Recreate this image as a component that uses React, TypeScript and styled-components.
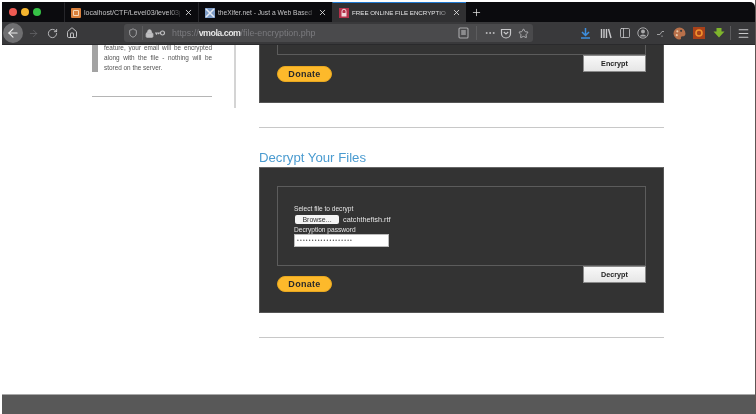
import React from "react";
import styled, { createGlobalStyle } from "styled-components";
import {
  ArrowLeft,
  ArrowRight,
  RotateCw,
  Home,
  Shield,
  Lock,
  MoreHorizontal,
  Star,
  X,
  Plus,
  Menu,
  PanelLeft,
} from "lucide-react";

const GlobalStyle = createGlobalStyle`
  html, body { margin: 0; padding: 0; background: #fff; }
  body { font-family: "Liberation Sans", Arial, sans-serif; overflow: hidden; }
`;

const Screen = styled.div`
  width: 756px;
  height: 414px;
  box-sizing: border-box;
  padding: 2px 0 0 2px;
  border-right: 1px solid #5e5654;
  display: flex;
  flex-direction: column;
  overflow: hidden;
  background: #fff;
  filter: blur(0.45px);
`;

const TabBar = styled.div`
  height: 20px;
  flex: none;
  display: flex;
  align-items: stretch;
  background: #0b0b0e;
  border-top-right-radius: 5px;
`;

const Lights = styled.div`
  width: 62px;
  flex: none;
  display: flex;
  align-items: center;
  gap: 4px;
  padding-left: 7px;
  box-sizing: border-box;
`;

const Light = styled.span<{ $c: string }>`
  width: 8px;
  height: 8px;
  border-radius: 50%;
  background: ${(p) => p.$c};
`;

const Tab = styled.div<{ $active?: boolean }>`
  width: 134px;
  flex: none;
  box-sizing: border-box;
  display: flex;
  align-items: center;
  padding: 0 5px 0 6px;
  gap: 3px;
  background: ${(p) => (p.$active ? "#303032" : "transparent")};
  border-left: 1px solid ${(p) => (p.$active ? "transparent" : "#26262a")};
  border-top: 1px solid ${(p) => (p.$active ? "#1f78d0" : "transparent")};
  color: ${(p) => (p.$active ? "#e2e2e4" : "#c4c4c6")};
  svg.close { flex: none; color: #e8e8e8; margin-left: 1px; }
`;

const TabTitle = styled.span<{ $fs: number }>`
  flex: 1;
  min-width: 0;
  font-size: ${(p) => p.$fs}px;
  line-height: 10px;
  white-space: nowrap;
  mask-image: linear-gradient(to right, #000 88%, rgba(0, 0, 0, 0.25));
`;

const NewTab = styled.div`
  width: 20px;
  display: flex;
  align-items: center;
  justify-content: center;
  color: #e8e8e8;
`;

const Toolbar = styled.div`
  height: 23px;
  flex: none;
  display: flex;
  align-items: center;
  background: #39393b;
  border-bottom: 1px solid #2a2a2c;
  box-sizing: border-box;
  color: #c8c8ca;
`;

const BackButton = styled.div`
  width: 20px;
  height: 20px;
  margin-left: 1px;
  border-radius: 50%;
  background: #6f6f71;
  color: #ececec;
  flex: none;
  display: flex;
  align-items: center;
  justify-content: center;
`;

const NavIcons = styled.div`
  width: 101px;
  flex: none;
  display: flex;
  align-items: center;
  padding-left: 5px;
  box-sizing: border-box;
  gap: 8px;
`;

const UrlBar = styled.div`
  width: 409px;
  height: 18px;
  flex: none;
  border-radius: 3px;
  background: #4a4a4c;
  display: flex;
  align-items: center;
  padding-left: 4px;
  box-sizing: border-box;
  color: #c0c0c2;
`;

const Divider = styled.span<{ $m?: string }>`
  width: 1px;
  height: 14px;
  flex: none;
  background: #5c5c5e;
  margin: ${(p) => p.$m || "0 4px"};
`;

const UrlText = styled.span`
  margin-left: 6px;
  font-size: 8.9px;
  white-space: nowrap;
  color: #7a7a7e;
`;

const Host = styled.b`
  color: #e6e6e6;
  font-weight: 700;
  letter-spacing: -0.5px;
`;

const UrlEnd = styled.div`
  margin-left: auto;
  display: flex;
  align-items: center;
  gap: 6px;
  padding-right: 4px;
`;

const Dots = styled(MoreHorizontal)`
  margin: 0 -2px 0 1px;
`;

const Tools = styled.div`
  flex: 1;
  display: grid;
  grid-template-columns: 21px 19px 19px 18px 18px 19px 20px 19px 4px 22px;
  justify-items: center;
  align-items: center;
  padding-left: 42px;
`;

const Page = styled.div`
  flex: 1;
  min-height: 0;
  display: flex;
  align-items: flex-start;
  padding-left: 90px;
  background: #fff;
`;

const Sidebar = styled.aside`
  width: 120px;
  flex: none;
`;

const Note = styled.div`
  height: 27px;
  border-left: 6px solid #a3a3a3;
  box-sizing: border-box;
  padding-left: 6px;
  overflow: hidden;
`;

const NoteText = styled.p`
  margin: -2px 0 0;
  font-size: 6.4px;
  line-height: 10.2px;
  color: #555;
  text-align: justify;
`;

const SideRule = styled.hr`
  margin: 24px 0 0;
  border: 0;
  height: 1px;
  background: #b5b5b5;
`;

const Rail = styled.div`
  width: 2px;
  height: 63px;
  margin-left: 22px;
  flex: none;
  background: #d4d4d4;
`;

const Main = styled.main`
  width: 405px;
  margin-left: 23px;
  flex: none;
`;

const Panel = styled.section<{ $clipped?: boolean }>`
  height: ${(p) => (p.$clipped ? "58px" : "146px")};
  box-sizing: border-box;
  padding: ${(p) => (p.$clipped ? "0" : "18px")} 17px 0;
  background: #333333;
  border: 1px solid #555;
  border-top: ${(p) => (p.$clipped ? "none" : "1px solid #666")};
`;

const Inset = styled.div<{ $clipped?: boolean }>`
  height: ${(p) => (p.$clipped ? "10px" : "80px")};
  box-sizing: border-box;
  border: 1px solid #5c5c5c;
  border-top: ${(p) => (p.$clipped ? "none" : "1px solid #5c5c5c")};
  padding: ${(p) => (p.$clipped ? "0" : "17px 0 0 16px")};
  color: #e4e4e4;
`;

const ActionRow = styled.div`
  display: flex;
  justify-content: space-between;
  align-items: flex-start;
`;

const Donate = styled.div<{ $top: number }>`
  width: 55px;
  height: 16px;
  margin-top: ${(p) => p.$top}px;
  border-radius: 8px;
  background: #fdb92b;
  border: 1px solid #e8a820;
  box-sizing: border-box;
  display: flex;
  align-items: center;
  justify-content: center;
  font-size: 9px;
  font-weight: 700;
  letter-spacing: 0.3px;
  color: #2a2a2a;
`;

const Submit = styled.div`
  width: 63px;
  height: 17px;
  box-sizing: border-box;
  background: linear-gradient(#f8f8f8, #e6e6e6);
  border: 1px solid #8a8a8a;
  display: flex;
  align-items: center;
  justify-content: center;
  font-size: 7.2px;
  font-weight: 700;
  color: #222;
`;

const Rule = styled.hr<{ $top: number }>`
  margin: ${(p) => p.$top}px 0 0;
  border: 0;
  height: 1px;
  background: #c8c8c8;
`;

const Heading = styled.h2`
  margin: 21px 0 0;
  font-size: 13.2px;
  line-height: 18px;
  font-weight: 400;
  color: #4a9bd0;
`;

const FieldLabel = styled.div`
  font-size: 6.6px;
  line-height: 9px;
`;

const FileRow = styled.div`
  display: flex;
  align-items: center;
  height: 11px;
  margin-top: 1px;
  gap: 4px;
  font-size: 7.3px;
`;

const Browse = styled.div`
  width: 44px;
  height: 9px;
  margin-left: 1px;
  border-radius: 2px;
  background: #f4f4f4;
  color: #333;
  font-size: 7px;
  line-height: 9px;
  text-align: center;
`;

const PasswordBox = styled.div`
  width: 95px;
  height: 13px;
  box-sizing: border-box;
  background: #fff;
  border: 1px solid #bbb;
  padding-left: 2px;
  color: #555;
  font-size: 5px;
  line-height: 11px;
  letter-spacing: 1.2px;
  white-space: nowrap;
  overflow: hidden;
`;

const Footer = styled.footer`
  height: 20px;
  flex: none;
  background: #585858;
  border-top: 1px solid #a9a9a9;
  box-sizing: border-box;
`;

const Favicon = ({ kind }: { kind: "xampp" | "xifer" | "lock" }) => (
  <svg width="10" height="10" viewBox="0 0 10 10" style={{ flex: "none" }}>
    {kind === "xampp" && (
      <>
        <rect width="10" height="10" rx="1" fill="#d9803c" />
        <path d="M2.5 2.5h5v5h-5z" fill="none" stroke="#f5d7b5" strokeWidth="1" />
      </>
    )}
    {kind === "xifer" && (
      <>
        <rect width="10" height="10" fill="#7d9cc7" />
        <path d="M1 1l8 8M9 1L1 9" stroke="#e4e9f2" strokeWidth="1.6" />
      </>
    )}
    {kind === "lock" && (
      <>
        <rect width="10" height="10" fill="#b5304a" />
        <path d="M3 5V3.2a2 2 0 0 1 4 0V5" fill="none" stroke="#f1d6da" />
        <rect x="2.5" y="5" width="5" height="3.5" fill="#f1d6da" />
      </>
    )}
  </svg>
);

const KeyIcon = () => (
  <svg width="12" height="8" viewBox="0 0 12 8" fill="none" stroke="#c0c0c2" strokeWidth="1.2">
    <circle cx="8.5" cy="4" r="2" />
    <path d="M6.5 4H1M2.5 4v1.8M4.5 4v1.3" />
  </svg>
);

const ReaderIcon = () => (
  <svg width="11" height="12" viewBox="0 0 11 12" fill="none" stroke="#a8a8aa" strokeWidth="1.1" style={{ marginRight: 1 }}>
    <rect x="1" y="1" width="9" height="10" rx="1" />
    <rect x="3.2" y="3" width="4.6" height="5" fill="#8c8c8e" stroke="none" />
  </svg>
);

const PocketIcon = () => (
  <svg width="12" height="11" viewBox="0 0 12 11" fill="none" stroke="#c8c8ca" strokeWidth="1.2">
    <path d="M1.5 1.5h9v4a4.5 4.5 0 0 1-9 0z" />
    <path d="M3.8 4l2.2 2 2.2-2" />
  </svg>
);

const DownloadIcon = () => (
  <svg width="11" height="12" viewBox="0 0 11 12" fill="none" stroke="#3d8fe0" strokeWidth="1.5">
    <path d="M5.5 1v7M2 5l3.5 3.5L9 5M1 11h9" />
  </svg>
);

const LibraryIcon = () => (
  <svg width="12" height="11" viewBox="0 0 12 11" fill="none" stroke="#c8c8ca" strokeWidth="1.4">
    <path d="M1.5 1v9M4 1v9M6.5 1v9M8.5 1l2.5 9" />
  </svg>
);

const AccountIcon = () => (
  <svg width="12" height="12" viewBox="0 0 12 12">
    <circle cx="6" cy="6" r="5.2" fill="none" stroke="#a9a9ab" />
    <circle cx="6" cy="4.6" r="2" fill="#a9a9ab" />
    <path d="M2.6 9.5a3.6 3 0 0 1 6.8 0z" fill="#a9a9ab" />
  </svg>
);

const TinyIcon = () => (
  <svg width="10" height="10" viewBox="0 0 10 10" fill="none" stroke="#a0a0a2" strokeWidth="1">
    <path d="M1 6.5h3l2-3h2M6 7.5V9" />
  </svg>
);

const PaletteIcon = () => (
  <svg width="13" height="13" viewBox="0 0 12 12">
    <path d="M6 .5a5.5 5.5 0 1 0 1 10.9c1-.6-.4-2 .8-2.6 1.3-.4 3.7.4 3.7-2.8A5.5 5.5 0 0 0 6 .5z" fill="#b8704a" />
    <circle cx="7.5" cy="3.5" r="1" fill="#3a3a3c" />
    <circle cx="4" cy="4" r="1" fill="#e8c9a8" />
    <circle cx="3.5" cy="7.5" r="1" fill="#e8c9a8" />
  </svg>
);

const OrangeIcon = () => (
  <svg width="12" height="12" viewBox="0 0 12 12">
    <rect width="12" height="12" fill="#a8411a" />
    <circle cx="6" cy="6" r="3" fill="none" stroke="#f0922e" strokeWidth="1.6" />
  </svg>
);

const GreenIcon = () => (
  <svg width="12" height="12" viewBox="0 0 12 12">
    <path d="M3.5 1h5v3.5H11.5L6 10.5.5 4.5h3z" fill="#7fb52c" />
  </svg>
);

export default function App() {
  return (
    <>
      <GlobalStyle />
      <Screen>
        <TabBar>
          <Lights>
            <Light $c="#ee5a52" />
            <Light $c="#f5b52e" />
            <Light $c="#36c246" />
          </Lights>
          <Tab>
            <Favicon kind="xampp" />
            <TabTitle $fs={7.1}>localhost/CTF/Level03/level03p</TabTitle>
            <X className="close" size={9} strokeWidth={2.2} />
          </Tab>
          <Tab>
            <Favicon kind="xifer" />
            <TabTitle $fs={6.7}>theXifer.net - Just a Web Based</TabTitle>
            <X className="close" size={9} strokeWidth={2.2} />
          </Tab>
          <Tab $active>
            <Favicon kind="lock" />
            <TabTitle $fs={6.2}>FREE ONLINE FILE ENCRYPTIO</TabTitle>
            <X className="close" size={9} strokeWidth={2.2} />
          </Tab>
          <NewTab>
            <Plus size={11} strokeWidth={1.6} />
          </NewTab>
        </TabBar>
        <Toolbar>
          <BackButton>
            <ArrowLeft size={14} strokeWidth={2} />
          </BackButton>
          <NavIcons>
            <ArrowRight size={11} strokeWidth={1.4} color="#6d6d70" />
            <RotateCw size={11} strokeWidth={1.9} />
            <Home size={12} strokeWidth={1.9} />
          </NavIcons>
          <UrlBar>
            <Shield size={10} strokeWidth={1.8} />
            <Divider $m="0 2px 0 4px" />
            <Lock size={9} strokeWidth={2.4} fill="#c0c0c2" />
            <KeyIcon />
            <UrlText>
              https://<Host>vmola.com</Host>/file-encryption.php
            </UrlText>
            <UrlEnd>
              <ReaderIcon />
              <Divider $m="0" />
              <Dots size={12} strokeWidth={2} />
              <PocketIcon />
              <Star size={11} strokeWidth={1.8} />
            </UrlEnd>
          </UrlBar>
          <Tools>
            <DownloadIcon />
            <LibraryIcon />
            <PanelLeft size={12} strokeWidth={1.6} />
            <AccountIcon />
            <TinyIcon />
            <PaletteIcon />
            <OrangeIcon />
            <GreenIcon />
            <Divider $m="0" />
            <Menu size={13} strokeWidth={2} />
          </Tools>
        </Toolbar>
        <Page>
          <Sidebar>
            <Note>
              <NoteText>
                feature, your email will be encrypted along with the file - nothing will be stored on the server.
              </NoteText>
            </Note>
            <SideRule />
          </Sidebar>
          <Rail />
          <Main>
            <Panel $clipped>
              <Inset $clipped />
              <ActionRow>
                <Donate $top={11}>Donate</Donate>
                <Submit>Encrypt</Submit>
              </ActionRow>
            </Panel>
            <Rule $top={24} />
            <Heading>Decrypt Your Files</Heading>
            <Panel>
              <Inset>
                <FieldLabel>Select file to decrypt</FieldLabel>
                <FileRow>
                  <Browse>Browse...</Browse>
                  <span>catchthefish.rtf</span>
                </FileRow>
                <FieldLabel>Decryption password</FieldLabel>
                <PasswordBox>•••••••••••••••••••</PasswordBox>
              </Inset>
              <ActionRow>
                <Donate $top={10}>Donate</Donate>
                <Submit>Decrypt</Submit>
              </ActionRow>
            </Panel>
            <Rule $top={24} />
          </Main>
        </Page>
        <Footer />
      </Screen>
    </>
  );
}
